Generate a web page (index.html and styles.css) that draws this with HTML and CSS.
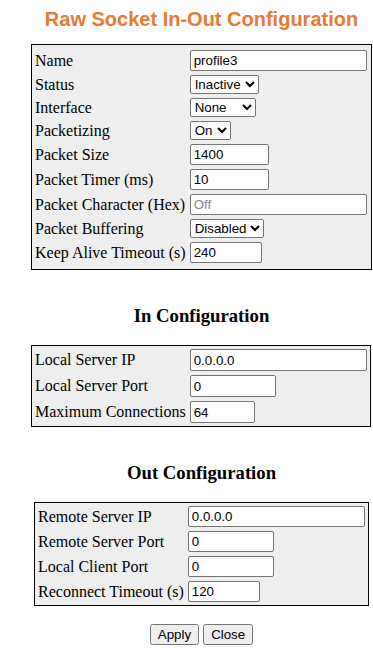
FILE: index.html
```html
<!DOCTYPE html>
<html lang="en">
<head>
    <meta charset="UTF-8">
    <meta name="viewport" content="width=device-width, initial-scale=1.0">
    <title>Raw Socket In-Out Configuration</title>
    <link rel="stylesheet" href="styles.css">
</head>
<body>
    <div class="page">
        <h1 class="title">Raw Socket In-Out Configuration</h1>

        <table class="config general">
            <tr>
                <td class="label">Name</td>
                <td class="field"><input type="text" class="w-long" value="profile3"></td>
            </tr>
            <tr>
                <td class="label">Status</td>
                <td class="field">
                    <select class="s-status">
                        <option>Active</option>
                        <option selected>Inactive</option>
                    </select>
                </td>
            </tr>
            <tr>
                <td class="label">Interface</td>
                <td class="field">
                    <select class="s-iface">
                        <option selected>None</option>
                        <option>Port 1</option>
                    </select>
                </td>
            </tr>
            <tr>
                <td class="label">Packetizing</td>
                <td class="field">
                    <select class="s-onoff">
                        <option selected>On</option>
                        <option>Off</option>
                    </select>
                </td>
            </tr>
            <tr>
                <td class="label">Packet Size</td>
                <td class="field"><input type="text" class="w-mid" value="1400"></td>
            </tr>
            <tr>
                <td class="label">Packet Timer (ms)</td>
                <td class="field"><input type="text" class="w-mid" value="10"></td>
            </tr>
            <tr>
                <td class="label">Packet Character (Hex)</td>
                <td class="field"><input type="text" class="w-long off" value="Off" readonly></td>
            </tr>
            <tr>
                <td class="label">Packet Buffering</td>
                <td class="field">
                    <select class="s-buffer">
                        <option>Enabled</option>
                        <option selected>Disabled</option>
                    </select>
                </td>
            </tr>
            <tr>
                <td class="label">Keep Alive Timeout (s)</td>
                <td class="field"><input type="text" class="w-short" value="240"></td>
            </tr>
        </table>

        <h3 class="section">In Configuration</h3>

        <table class="config in-config">
            <tr>
                <td class="label">Local Server IP</td>
                <td class="field"><input type="text" class="w-long" value="0.0.0.0"></td>
            </tr>
            <tr>
                <td class="label">Local Server Port</td>
                <td class="field"><input type="text" class="w-port" value="0"></td>
            </tr>
            <tr>
                <td class="label">Maximum Connections</td>
                <td class="field"><input type="text" class="w-max" value="64"></td>
            </tr>
        </table>

        <h3 class="section">Out Configuration</h3>

        <table class="config out-config">
            <tr>
                <td class="label">Remote Server IP</td>
                <td class="field"><input type="text" class="w-long" value="0.0.0.0"></td>
            </tr>
            <tr>
                <td class="label">Remote Server Port</td>
                <td class="field"><input type="text" class="w-port" value="0"></td>
            </tr>
            <tr>
                <td class="label">Local Client Port</td>
                <td class="field"><input type="text" class="w-port" value="0"></td>
            </tr>
            <tr>
                <td class="label">Reconnect Timeout (s)</td>
                <td class="field"><input type="text" class="w-short" value="120"></td>
            </tr>
        </table>

        <div class="actions">
            <button type="button">Apply</button>
            <button type="button">Close</button>
        </div>
    </div>
</body>
</html>
```

FILE: styles.css
```css
body {
    margin: 0;
    font-family: "Liberation Serif", "Times New Roman", serif;
    font-size: 16px;
    color: #000;
    background: #fff;
}

.page {
    width: 341px;
    margin-left: 31px;
    text-align: center;
}

.title {
    font-family: "Liberation Sans", Arial, sans-serif;
    font-size: 20px;
    line-height: 23px;
    color: #e77b35;
    margin: 8px 0 13px;
}

.section {
    font-size: 18.72px;
    line-height: 22px;
    margin: 35px 0 18px;
}

.config {
    border: 1px solid #000;
    background: #eeeeee;
    border-spacing: 2px;
    text-align: left;
}

.general {
    width: 341px;
    padding: 2px 0 3px;
}

.in-config {
    width: 340px;
}

.out-config {
    width: 335px;
    margin: 0 auto;
}

.config td {
    padding: 1px;
    white-space: nowrap;
    vertical-align: middle;
}

.config td.field {
    width: 100%;
}

.config input[type="text"] {
    box-sizing: border-box;
    height: 21px;
    margin: 0;
    padding: 1px 3px;
    border: 1px solid #767676;
    border-radius: 2px;
    font-family: "Liberation Sans", Arial, sans-serif;
    font-size: 13.33px;
    color: #000;
    background: #fff;
}

.in-config input[type="text"] {
    height: 22px;
}

.config input.off {
    color: #8a8a8a;
}

.config select {
    margin: 0;
    font-family: "Liberation Sans", Arial, sans-serif;
    font-size: 13.33px;
    color: #000;
}

.w-long { width: 177px; }
.w-mid { width: 79px; }
.w-short { width: 72px; }
.w-port { width: 86px; }
.w-max { width: 65px; }

.s-status { width: 69px; }
.s-iface { width: 66px; }
.s-onoff { width: 41px; }
.s-buffer { width: 74px; }

.actions {
    margin-top: 18px;
}

.actions button {
    box-sizing: border-box;
    height: 21px;
    padding: 1px 6px;
    font-family: "Liberation Sans", Arial, sans-serif;
    font-size: 13.33px;
}
```
